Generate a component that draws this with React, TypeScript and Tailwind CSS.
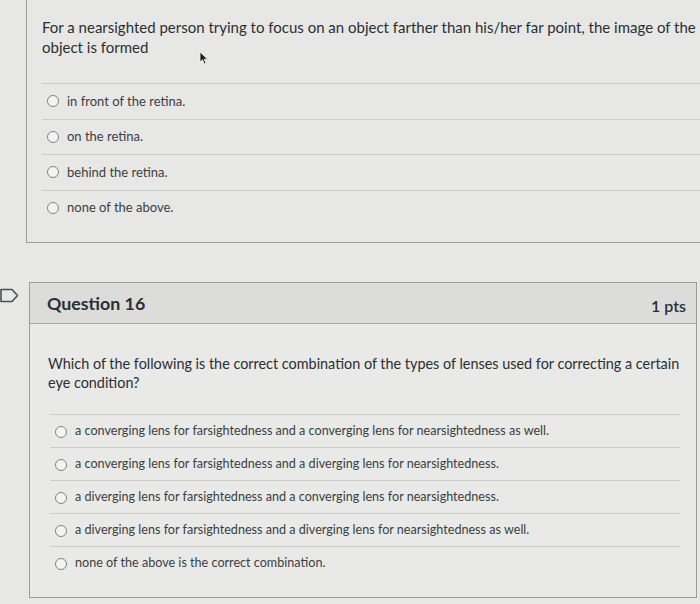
import React from 'react';

const firstAnswers = [
  'in front of the retina.',
  'on the retina.',
  'behind the retina.',
  'none of the above.',
];

const secondAnswers = [
  'a converging lens for farsightedness and a converging lens for nearsightedness as well.',
  'a converging lens for farsightedness and a diverging lens for nearsightedness.',
  'a diverging lens for farsightedness and a converging lens for nearsightedness.',
  'a diverging lens for farsightedness and a diverging lens for nearsightedness as well.',
  'none of the above is the correct combination.',
];

function Radio() {
  return (
    <span className="inline-block w-[12px] h-[12px] rounded-full border border-[#7d8388] bg-[#f4f4f2] shrink-0" />
  );
}

function Cursor() {
  return (
    <svg className="absolute left-[199px] top-[51px]" width="10" height="14" viewBox="0 0 10 14">
      <path d="M1 1 L1 11 L3.5 8.8 L5.4 13 L7 12.3 L5.2 8.2 L8.6 8.2 Z" fill="#1f1f1f" stroke="#f2f2f2" strokeWidth="0.8" />
    </svg>
  );
}

export default function App() {
  return (
    <div className="relative w-[700px] h-[604px] overflow-hidden bg-[#e7e7e5] font-['Lato',sans-serif] text-[#2d3b45]">
      {/* previous question, cut off at the top */}
      <div className="ml-[26px] h-[243px] border-l border-b border-[#9b9c9c] pl-[15px] pt-[17px]">
        <p className="w-[660px] text-[15px] leading-[20px] text-[#2b2f33]">
          For a nearsighted person trying to focus on an object farther than his/her far point, the image of the
          object is formed
        </p>
        <div className="mt-[26px]">
          {firstAnswers.map((a) => (
            <div key={a} className="flex h-[35.6px] items-center gap-[8px] border-t border-[#c9cac9] pl-[5px]">
              <Radio />
              <span className="text-[13px] text-[#3a3f44]">{a}</span>
            </div>
          ))}
        </div>
      </div>
      <Cursor />

      {/* question 16 */}
      <div className="mt-[39px] flex">
        <div className="w-[29px] shrink-0 pt-[6px]">
          <svg width="20" height="15" viewBox="0 0 20 15">
            <path d="M1 1.5 L12 1.5 L17.5 7.5 L12 13.5 L1 13.5 Z" fill="none" stroke="#4a4f54" strokeWidth="1.6" strokeLinejoin="round" />
          </svg>
        </div>
        <div className="mr-[3px] h-[316px] flex-1 border border-[#9b9c9c] bg-[#e9e9e7]">
          <div className="flex h-[41px] items-center justify-between border-b border-[#a9aaa9] bg-[#dcdcda] pl-[17px] pr-[10px]">
            <h2 className="text-[17.8px] font-bold text-[#2b2f33]">Question 16</h2>
            <span className="pt-[6px] text-[16px] font-semibold text-[#2b2f33]">1 pts</span>
          </div>
          <div className="pt-[30px]">
            <p className="pl-[18px] pr-[6px] text-[14.4px] leading-[19px] text-[#2b2f33]">
              Which of the following is the correct combination of the types of lenses used for correcting a certain
              eye condition?
            </p>
            <div className="ml-[20px] mr-[16px] mt-[22px]">
              {secondAnswers.map((a) => (
                <div key={a} className="flex h-[33px] items-center gap-[8px] border-t border-[#cacbca] pl-[5px] pt-[1px]">
                  <Radio />
                  <span className="text-[12.6px] text-[#3a3f44]">{a}</span>
                </div>
              ))}
            </div>
          </div>
        </div>
      </div>
    </div>
  );
}
